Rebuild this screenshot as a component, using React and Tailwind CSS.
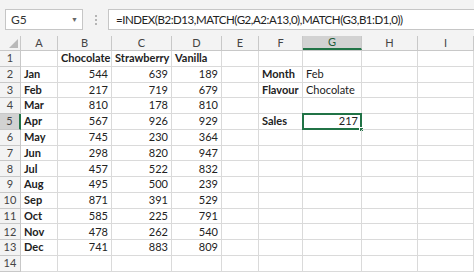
const cols = ["A", "B", "C", "D", "E", "F", "G", "H", "I"];
const widths = [37, 54, 60, 50, 37, 44, 59, 56, 56];

const data = [
  ["Jan", 544, 639, 189],
  ["Feb", 217, 719, 679],
  ["Mar", 810, 178, 810],
  ["Apr", 567, 926, 929],
  ["May", 745, 230, 364],
  ["Jun", 298, 820, 947],
  ["Jul", 457, 522, 832],
  ["Aug", 495, 500, 239],
  ["Sep", 871, 391, 529],
  ["Oct", 585, 225, 791],
  ["Nov", 478, 262, 540],
  ["Dec", 741, 883, 809],
];

const side = {
  2: ["Month", "Feb"],
  3: ["Flavour", "Chocolate"],
  5: ["Sales", 217],
};

function rowCells(r) {
  // returns 9 cells: [content, align, bold]
  const cells = Array(9).fill(null);
  if (r === 1) {
    cells[1] = ["Chocolate", "left", true];
    cells[2] = ["Strawberry", "left", true];
    cells[3] = ["Vanilla", "left", true];
  } else if (r >= 2 && r <= 13) {
    const d = data[r - 2];
    cells[0] = [d[0], "left", true];
    cells[1] = [d[1], "right", false];
    cells[2] = [d[2], "right", false];
    cells[3] = [d[3], "right", false];
  }
  if (side[r]) {
    cells[5] = [side[r][0], "left", true];
    cells[6] = [side[r][1], typeof side[r][1] === "number" ? "right" : "left", false];
  }
  return cells;
}

const App = () => {
  const rows = Array.from({ length: 14 }, (_, i) => i + 1);
  return (
    <div
      className="w-[474px] h-[272px] overflow-hidden bg-white text-[#222]"
      style={{ fontFamily: "Lato, 'Liberation Sans', sans-serif" }}
    >
      {/* Formula bar */}
      <div className="h-[36px] bg-[#f3f3f3] flex items-start pt-[9px] pl-[5px]">
        <div className="w-[78px] h-[21px] bg-white border border-[#c6c6c6] flex items-center justify-between pl-[5px] pr-[4px] text-[12px] text-[#333]">
          <span>G5</span>
          <span className="text-[7px] text-[#666]">▼</span>
        </div>
        <div className="w-[25px] h-[21px] flex flex-col items-center justify-center gap-[2px]">
          <span className="w-[2px] h-[2px] bg-[#b5b5b5]" />
          <span className="w-[2px] h-[2px] bg-[#b5b5b5]" />
          <span className="w-[2px] h-[2px] bg-[#b5b5b5]" />
        </div>
        <div className="flex-1 h-[21px] bg-white border border-r-0 border-[#c6c6c6] flex items-center pl-[7px] text-[11.5px] tracking-[-0.45px] text-[#222] whitespace-nowrap">
          =INDEX(B2:D13,MATCH(G2,A2:A13,0),MATCH(G3,B1:D1,0))
        </div>
      </div>

      {/* Column headers */}
      <div className="flex h-[15px] bg-[#f3f3f3] border-b border-[#c8c8c8] text-[11px] text-[#444]">
        <div className="w-[21px] shrink-0 border-r border-[#c8c8c8] relative">
          <svg className="absolute right-[2px] bottom-[2px]" width="9" height="9" viewBox="0 0 9 9">
            <polygon points="9,0 9,9 0,9" fill="#b9b9b9" />
          </svg>
        </div>
        {cols.map((c, i) => (
          <div
            key={c}
            className={
              "shrink-0 flex items-center justify-center border-r border-[#c8c8c8] " +
              (c === "G" ? "bg-[#d2d2d2] border-b-2 border-b-[#217346] text-[#1e5c3a]" : "")
            }
            style={{ width: widths[i] }}
          >
            {c}
          </div>
        ))}
      </div>

      {/* Rows */}
      {rows.map((r) => {
        const cells = rowCells(r);
        return (
          <div key={r} className="flex h-[15.77px] text-[11px]">
            <div
              className={
                "w-[21px] shrink-0 flex items-center justify-center border-b border-r border-[#c8c8c8] text-[#444] " +
                (r === 5 ? "bg-[#d2d2d2] border-r-2 border-r-[#217346]" : "bg-[#f3f3f3]")
              }
            >
              {r}
            </div>
            {cells.map((cell, i) => (
              <div
                key={i}
                className={
                  "shrink-0 relative flex items-center border-b border-r border-[#dadada] px-[3px] whitespace-nowrap " +
                  (cell && cell[1] === "right" ? "justify-end " : "justify-start ") +
                  (cell && cell[2] ? "font-bold" : "")
                }
                style={{ width: widths[i] }}
              >
                {cell ? cell[0] : ""}
                {r === 5 && i === 6 && (
                  <div className="absolute left-[-1px] top-[-1px] right-[-1px] bottom-[-1px] border-2 border-[#217346]">
                    <div className="absolute right-[-4px] bottom-[-4px] w-[5px] h-[5px] bg-[#217346] border border-white" />
                  </div>
                )}
              </div>
            ))}
          </div>
        );
      })}
    </div>
  );
};

export default App;
